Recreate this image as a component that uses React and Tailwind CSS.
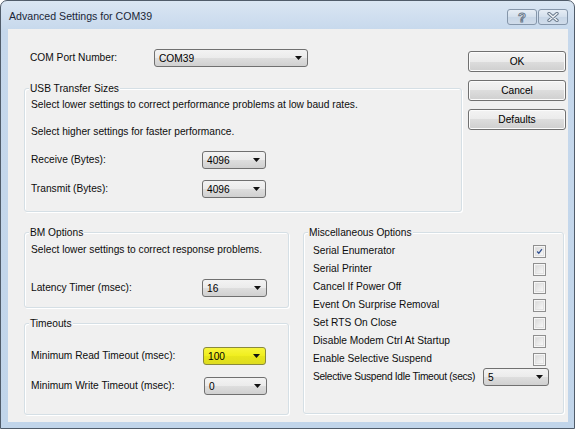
import React from "react";

const comboBase =
  "h-[18px] shrink-0 flex items-center justify-between rounded-[3px] border pl-[4px] pr-[5px]";

const Combo = ({ value, w, yellow }) => (
  <div
    className={`${comboBase} ${w} ${
      yellow
        ? "border-[#8a8a3c] bg-[linear-gradient(#f7f53c,#f0ee1e_50%,#e8e61a_50%,#dedc20)]"
        : "border-[#707070] bg-[linear-gradient(#f3f3f3,#ebebeb_50%,#dedede_50%,#d0d0d0)]"
    }`}
  >
    <span className="leading-[13px] text-black">{value}</span>
    <svg width="7" height="4" viewBox="0 0 7 4">
      <polygon points="0,0 7,0 3.5,4" fill="#111" />
    </svg>
  </div>
);

const Button = ({ label }) => (
  <div className="w-[98px] h-[21px] flex items-center justify-center rounded-[3px] border border-[#707070] bg-[linear-gradient(#f3f3f3,#ebebeb_50%,#dddddd_50%,#cfcfcf)] shadow-[inset_0_0_0_1px_#fbfbfb] text-black">
    {label}
  </div>
);

const Checkbox = ({ checked }) => (
  <div className="w-[13px] h-[13px] shrink-0 border border-[#8f8f8f] bg-[#f6f6f6] p-[1px]">
    <div className="w-full h-full border border-[#e2e2e2] bg-[linear-gradient(135deg,#dcdcdc,#f7f7f7)] flex items-center justify-center">
      {checked && (
        <svg width="9" height="9" viewBox="0 0 9 9">
          <path d="M1.5 4.5 L3.6 6.8 L7.6 1.4" fill="none" stroke="#2f4f91" strokeWidth="1.6" />
        </svg>
      )}
    </div>
  </div>
);

const Group = ({ title, className, children }) => (
  <div
    className={`relative rounded-[3px] border border-[#d5dfe5] shadow-[inset_1px_1px_0_#ffffff,1px_1px_0_#ffffff] ${className}`}
  >
    <span className="absolute -top-[7px] left-[4px] bg-[#f0f0f0] px-[1px] leading-[13px]">
      {title}
    </span>
    {children}
  </div>
);

const miscOptions = [
  { label: "Serial Enumerator", checked: true },
  { label: "Serial Printer" },
  { label: "Cancel If Power Off" },
  { label: "Event On Surprise Removal" },
  { label: "Set RTS On Close" },
  { label: "Disable Modem Ctrl At Startup" },
  { label: "Enable Selective Suspend" },
];

export default function App() {
  return (
    <div className="w-[576px] h-[429px] bg-white font-['Liberation_Sans',Arial,sans-serif] text-[10.2px] text-[#0d0d0d]">
      <div className="w-[575px] h-[429px] flex flex-col rounded-t-[7px] border border-[#505c6a] bg-[linear-gradient(#dae6f3,#c6d8ec_30px,#c1d5ea)]">
        {/* Title bar */}
        <div className="h-[28px] flex items-center pt-[4px] pl-[8px] pr-[6px]">
          <span className="text-[10.6px] text-[#1a2636]">Advanced Settings for COM39</span>
          <div className="ml-auto flex gap-[1px]">
            <div className="w-[30px] h-[16px] flex items-center justify-center rounded-[3px] border border-[#8596aa] bg-[linear-gradient(#e6edf5,#d3dfec_50%,#c7d6e7_50%,#d0dcea)]">
              <span className="text-[13px] leading-[13px] font-bold text-[#f3f6f9] [-webkit-text-stroke:1px_#6b7a8c]">?</span>
            </div>
            <div className="w-[30px] h-[16px] flex items-center justify-center rounded-[3px] border border-[#8596aa] bg-[linear-gradient(#e6edf5,#d3dfec_50%,#c7d6e7_50%,#d0dcea)]">
              <svg width="12" height="10" viewBox="0 0 12 10">
                <path d="M2 1.5 L10 8.5 M10 1.5 L2 8.5" stroke="#6b7a8c" strokeWidth="3.4" strokeLinecap="round" />
                <path d="M2 1.5 L10 8.5 M10 1.5 L2 8.5" stroke="#f3f6f9" strokeWidth="1.4" strokeLinecap="round" />
              </svg>
            </div>
          </div>
        </div>

        {/* Client area */}
        <div className="flex-1 ml-[7px] mr-[6px] mb-[6px] bg-[#f0f0f0] pl-[16px] pt-[20px] flex flex-col">
          <div className="flex">
            <div className="w-[438px] flex flex-col">
              <div className="h-[18px] flex items-center">
                <span className="w-[130px] pl-[6px]">COM Port Number:</span>
                <Combo value="COM39" w="w-[154px]" />
              </div>

              <Group title="USB Transfer Sizes" className="mt-[21px] h-[124px]">
                <div className="pl-[6px] pt-[9px] flex flex-col">
                  <div className="h-[14px] flex items-center">
                    Select lower settings to correct performance problems at low baud rates.
                  </div>
                  <div className="h-[14px] mt-[13px] flex items-center">
                    Select higher settings for faster performance.
                  </div>
                  <div className="h-[18px] mt-[12px] flex items-center">
                    <span className="w-[171px]">Receive (Bytes):</span>
                    <Combo value="4096" w="w-[64px]" />
                  </div>
                  <div className="h-[18px] mt-[11px] flex items-center">
                    <span className="w-[171px]">Transmit (Bytes):</span>
                    <Combo value="4096" w="w-[64px]" />
                  </div>
                </div>
              </Group>
            </div>

            <div className="ml-[6px] mt-[2px] flex flex-col gap-[8px]">
              <Button label="OK" />
              <Button label="Cancel" />
              <Button label="Defaults" />
            </div>
          </div>

          <div className="flex mt-[20px]">
            <div className="w-[265px] flex flex-col">
              <Group title="BM Options" className="h-[76px]">
                <div className="pl-[6px] pt-[10px] flex flex-col">
                  <div className="h-[14px] flex items-center">
                    Select lower settings to correct response problems.
                  </div>
                  <div className="h-[18px] mt-[22px] flex items-center">
                    <span className="w-[171px]">Latency Timer (msec):</span>
                    <Combo value="16" w="w-[65px]" />
                  </div>
                </div>
              </Group>

              <Group title="Timeouts" className="mt-[15px] h-[92px]">
                <div className="pl-[6px] pt-[23px] flex flex-col">
                  <div className="h-[18px] flex items-center">
                    <span className="w-[172px]">Minimum Read Timeout (msec):</span>
                    <Combo value="100" w="w-[63px]" yellow />
                  </div>
                  <div className="h-[18px] mt-[12px] flex items-center">
                    <span className="w-[173px]">Minimum Write Timeout (msec):</span>
                    <Combo value="0" w="w-[63px]" />
                  </div>
                </div>
              </Group>
            </div>

            <Group title="Miscellaneous Options" className="ml-[14px] w-[261px] h-[182px]">
              <div className="pl-[9px] pt-[9px] flex flex-col">
                {miscOptions.map((o) => (
                  <div key={o.label} className="h-[18px] flex items-center">
                    <span className="w-[220px] shrink-0 whitespace-nowrap">{o.label}</span>
                    <Checkbox checked={o.checked} />
                  </div>
                ))}
                <div className="h-[18px] flex items-center">
                  <span className="w-[170px] shrink-0 whitespace-nowrap tracking-[-0.3px]">
                    Selective Suspend Idle Timeout (secs)
                  </span>
                  <Combo value="5" w="w-[66px]" />
                </div>
              </div>
            </Group>
          </div>
        </div>
      </div>
    </div>
  );
}
